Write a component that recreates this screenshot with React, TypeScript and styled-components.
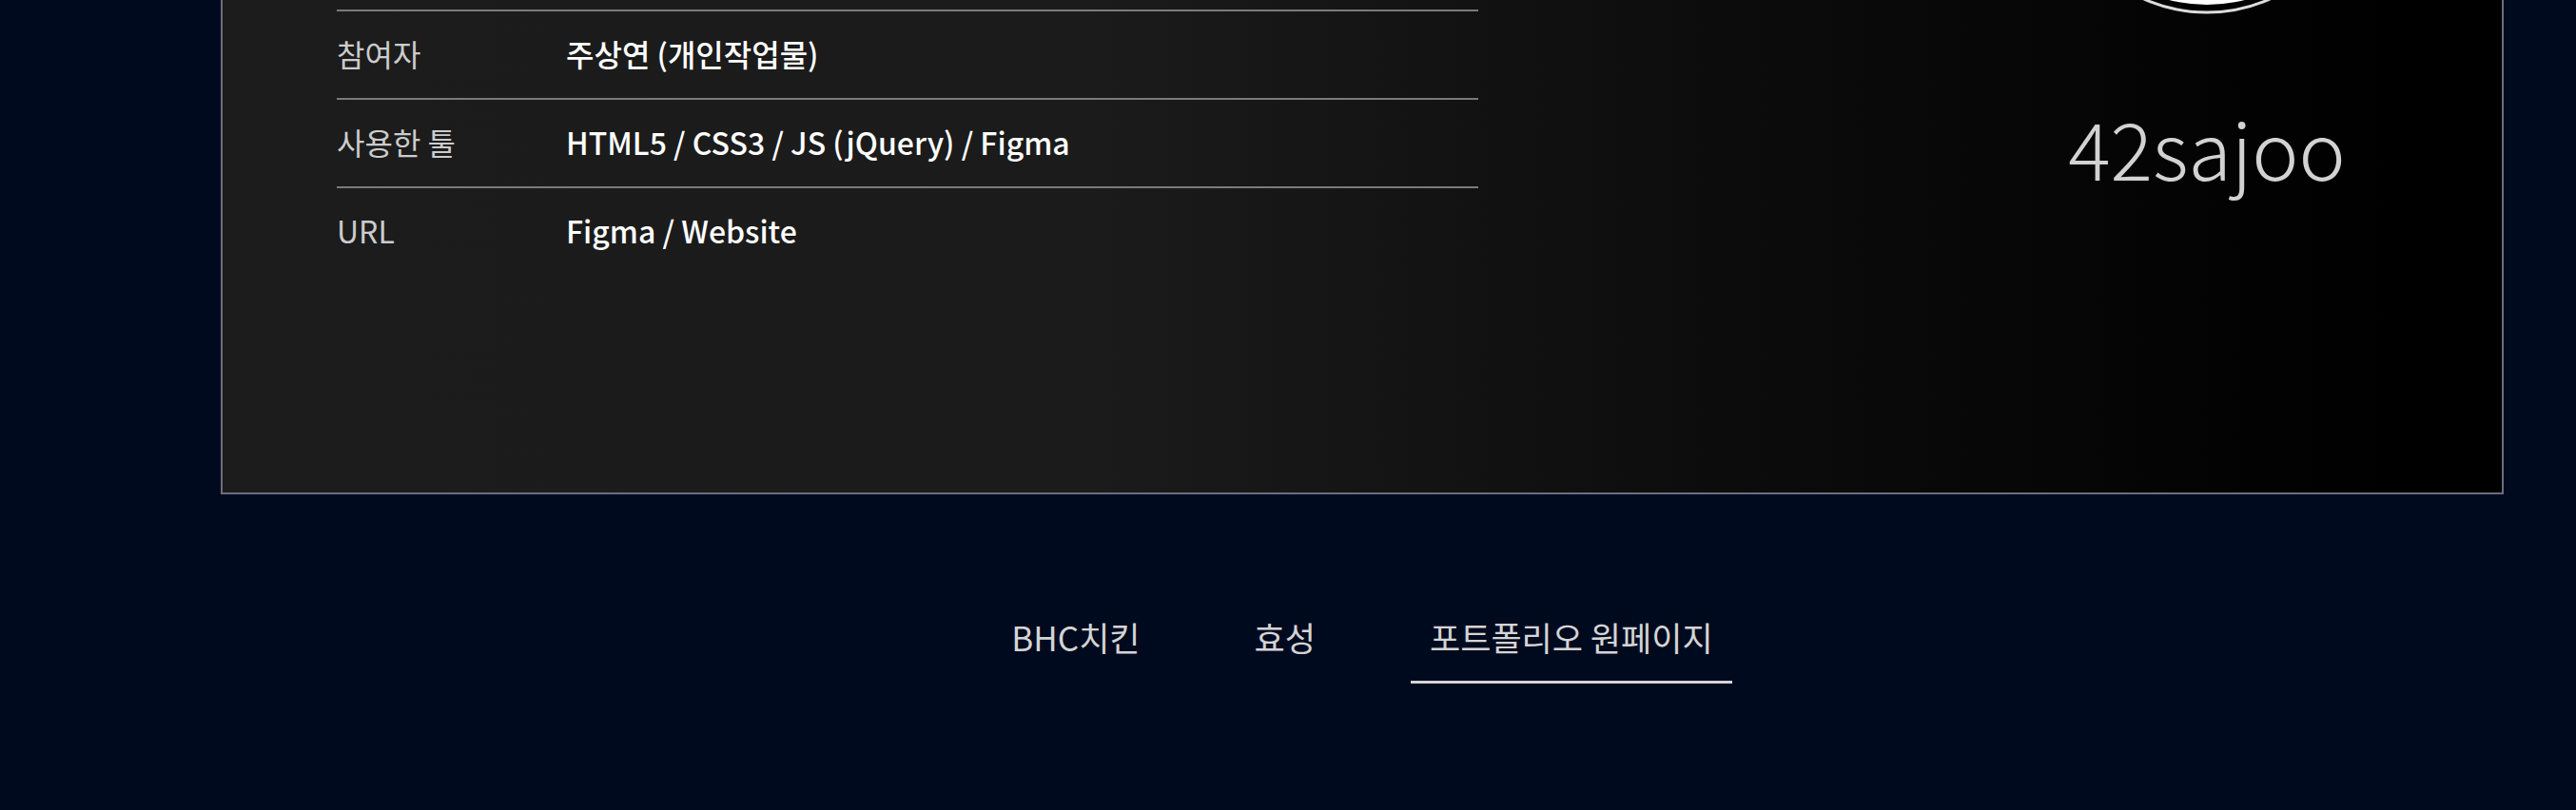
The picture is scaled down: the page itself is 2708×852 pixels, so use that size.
import React from 'react';
import styled, { createGlobalStyle } from 'styled-components';

const GlobalStyle = createGlobalStyle`
  html, body {
    margin: 0;
    padding: 0;
    background: #000a1f;
  }
  body {
    font-family: "Noto Sans CJK KR", "Noto Sans", sans-serif;
    color: #fff;
    overflow: hidden;
  }
`;

const Page = styled.main`
  width: 2400px;
  margin: -220px 0 0 232px;
  padding-bottom: 140px;
`;

const Panel = styled.section`
  display: flex;
  justify-content: space-between;
  height: 740px;
  box-sizing: border-box;
  padding: 228px 0 0 120px;
  border: 2px solid #6b6e7e;
  background: linear-gradient(90deg, #1c1c1c 0%, #1b1b1b 38%, #0c0c0c 66%, #000 95%);
`;

const InfoList = styled.dl`
  width: 1200px;
  margin: 0;
`;

const InfoRow = styled.div`
  display: flex;
  align-items: center;
  height: 88px;
  padding-bottom: 3px;
  border-top: 2px solid #7a7a7a;
`;

const Label = styled.dt`
  width: 241px;
  flex-shrink: 0;
  font-size: 32px;
  color: #cccccc;
`;

const Value = styled.dd`
  margin: 0;
  font-size: 32px;
  font-weight: 500;
  color: #fff;
`;

const Brand = styled.div`
  width: 620px;
  display: flex;
  flex-direction: column;
  align-items: center;
  margin-top: -325px;
`;

const Logo = styled.svg`
  width: 330px;
  height: 332px;
  display: block;
`;

const BrandName = styled.p`
  margin: 96px 0 0;
  font-size: 83px;
  line-height: 1;
  font-weight: 300;
  color: #d2d2d2;
`;

const Tabs = styled.nav`
  display: flex;
  justify-content: center;
  gap: 80px;
  margin-top: 124px;
`;

const Tab = styled.a<{ $active?: boolean }>`
  padding: 0 20px 21px;
  font-size: 35px;
  color: #d4d4d4;
  text-decoration: none;
  border-bottom: 3px solid ${p => (p.$active ? '#d4d4d4' : 'transparent')};
  cursor: pointer;
`;

const rows = [
  { label: '참여자', value: '주상연 (개인작업물)' },
  { label: '사용한 툴', value: 'HTML5 / CSS3 / JS (jQuery) / Figma' },
  { label: 'URL', value: 'Figma / Website' },
];

const tabs = ['BHC치킨', '효성', '포트폴리오 원페이지'];

export default function App() {
  return (
    <>
      <GlobalStyle />
      <Page>
        <Panel>
          <InfoList>
            {rows.map(r => (
              <InfoRow key={r.label}>
                <Label>{r.label}</Label>
                <Value>{r.value}</Value>
              </InfoRow>
            ))}
          </InfoList>
          <Brand>
            <Logo viewBox="0 0 330 332">
              <circle cx="165" cy="165" r="163" fill="none" stroke="#dcdcdc" strokeWidth="3" />
              <circle cx="165" cy="165" r="160" fill="#000" />
              <ellipse cx="165" cy="180" rx="150" ry="140" fill="#fff" />
            </Logo>
            <BrandName>42sajoo</BrandName>
          </Brand>
        </Panel>
        <Tabs>
          {tabs.map((t, i) => (
            <Tab key={t} $active={i === tabs.length - 1}>
              {t}
            </Tab>
          ))}
        </Tabs>
      </Page>
    </>
  );
}
